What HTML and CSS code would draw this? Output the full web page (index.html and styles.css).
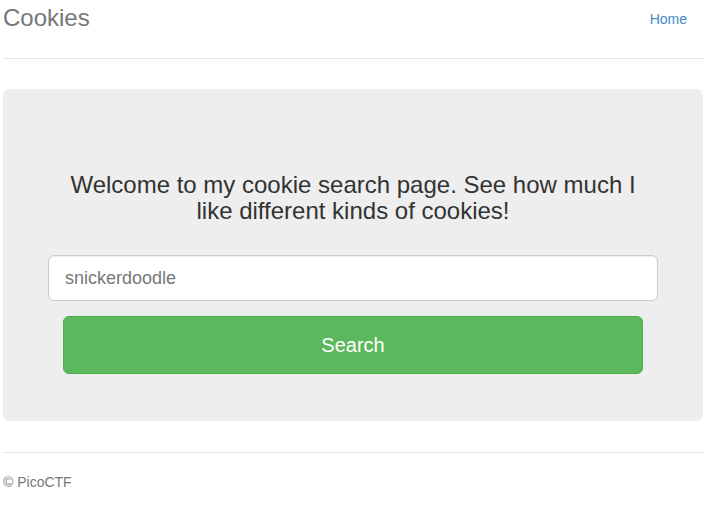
FILE: index.html
```html
<!DOCTYPE html>
<html>
<head>
<meta charset="utf-8">
<title>Cookies</title>
<link rel="stylesheet" href="styles.css">
</head>
<body>
<div class="container">
  <div class="header">
    <h3 class="brand">Cookies</h3>
    <nav class="nav"><a href="#" class="nav-link">Home</a></nav>
  </div>
  <div class="jumbotron">
    <h3 class="lead-title">Welcome to my cookie search page. See how much I like different kinds of cookies!</h3>
    <form class="search-form">
      <input class="search-input" type="text" placeholder="snickerdoodle">
      <button class="search-btn" type="button">Search</button>
    </form>
  </div>
  <footer class="footer">
    <p class="copy">© PicoCTF</p>
  </footer>
</div>
</body>
</html>
```
FILE: styles.css
```css
* { box-sizing: border-box; }
html, body { margin: 0; padding: 0; background: #fff; }
body {
  font-family: "Liberation Sans", Arial, sans-serif;
  font-size: 14px;
  color: #333;
}
.container {
  margin: 0 19px 0 3px;
}
.header {
  display: flex;
  justify-content: space-between;
  align-items: flex-start;
  height: 59px;
  border-bottom: 1px solid #e5e5e5;
}
.brand {
  margin: 0;
  font-size: 24px;
  font-weight: 400;
  line-height: 36px;
  color: #777;
}
.nav { padding-top: 9px; padding-right: 16px; }
.nav-link {
  color: #428bca;
  text-decoration: none;
  font-size: 14px;
  line-height: 20px;
}
.jumbotron {
  margin-top: 30px;
  height: 332px;
  background: #eee;
  border-radius: 6px;
  padding: 83px 45px 0 45px;
  display: flex;
  flex-direction: column;
}
.lead-title {
  margin: 0 15px;
  font-size: 24px;
  font-weight: 400;
  line-height: 26px;
  text-align: center;
  color: #333;
}
.search-form {
  display: flex;
  flex-direction: column;
  gap: 15px;
  margin-top: 31px;
}
.search-input {
  height: 46px;
  width: 100%;
  padding: 10px 16px;
  font-family: inherit;
  font-size: 18px;
  color: #555;
  background: #fff;
  border: 1px solid #ccc;
  border-radius: 6px;
  box-shadow: inset 0 1px 1px rgba(0,0,0,.075);
  outline: none;
}
.search-input::placeholder { color: #777; opacity: 1; }
.search-btn {
  margin: 0 15px;
  height: 58px;
  font-family: inherit;
  font-size: 20px;
  color: #fff;
  background: #5cb85c;
  border: 1px solid #4cae4c;
  border-radius: 6px;
}
.footer {
  margin-top: 31px;
  border-top: 1px solid #e5e5e5;
  padding-top: 19px;
}
.copy {
  margin: 0;
  font-size: 14px;
  line-height: 20px;
  color: #777;
}
```
